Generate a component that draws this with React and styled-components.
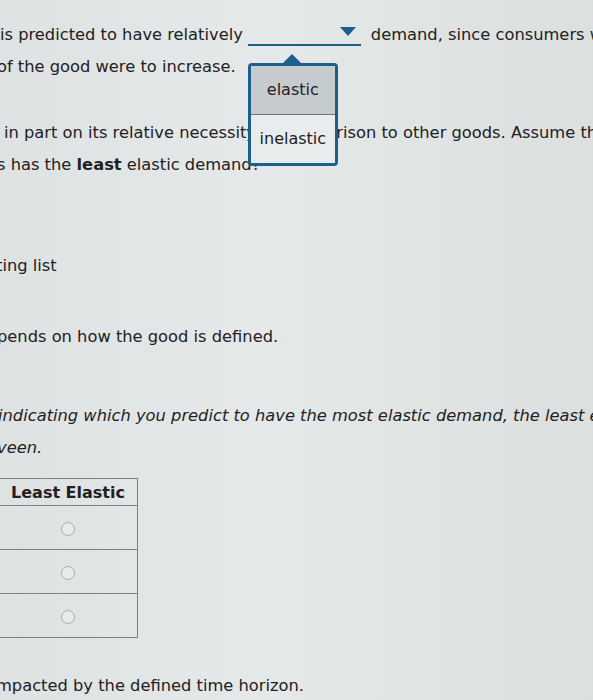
import React from "react";
import styled, { createGlobalStyle } from "styled-components";

const GlobalStyle = createGlobalStyle`
  html, body {
    margin: 0;
    padding: 0;
    background: #e3e6e6;
  }
  body {
    font-family: "DejaVu Sans", Verdana, sans-serif;
    color: #1f2122;
  }
`;

const Page = styled.div`
  width: 593px;
  height: 700px;
  overflow: hidden;
  padding-top: 19px;
  box-sizing: border-box;
  background: linear-gradient(90deg, #dfe2e2 0%, #e6e9e9 45%, #e2e6e5 60%, #dcdfdf 100%);
`;

const Para = styled.div`
  font-size: 16.3px;
  line-height: 32px;
  margin-top: ${(p) => p.$gap || 0}px;
  font-style: ${(p) => (p.$italic ? "italic" : "normal")};
`;

const Line = styled.div`
  white-space: nowrap;
  text-indent: ${(p) => p.$shift || 0}px;
`;

const Dropdown = styled.span`
  position: relative;
  display: inline-block;
  width: 113px;
  height: 22px;
  margin: 0 10px 0 5px;
  vertical-align: -6px;
  border-bottom: 2px solid #1d5f8b;
  text-indent: 0;
`;

const Caret = styled.span`
  position: absolute;
  right: 5px;
  top: 5px;
  width: 0;
  height: 0;
  border-left: 8px solid transparent;
  border-right: 8px solid transparent;
  border-top: 9px solid #1d5f8b;
`;

const Menu = styled.div`
  position: absolute;
  left: 0;
  top: 41px;
  width: 84px;
  border: 3px solid #1d5f8b;
  border-radius: 4px;
  background: #e9ecec;
  z-index: 2;

  &::before {
    content: "";
    position: absolute;
    left: 31px;
    top: -12px;
    border-left: 10px solid transparent;
    border-right: 10px solid transparent;
    border-bottom: 10px solid #1d5f8b;
  }
`;

const Option = styled.div`
  height: 48px;
  line-height: 48px;
  text-align: center;
  font-size: 16px;
  font-style: normal;
  color: #1f2122;
  background: ${(p) => (p.$active ? "#c6cccd" : "#e9ecec")};
  border-top: ${(p) => (p.$first ? "none" : "1px solid #6c7577")};
`;

const Table = styled.table`
  margin-top: 14px;
  margin-left: -2px;
  border-collapse: collapse;
  font-size: 16px;
`;

const HeadCell = styled.th`
  width: 138px;
  height: 26px;
  padding: 0;
  border: 1px solid #7c8283;
  font-weight: bold;
  text-align: center;
`;

const Cell = styled.td`
  height: 43px;
  padding: 0;
  border: 1px solid #7c8283;
  text-align: center;
`;

const Radio = styled.span`
  display: inline-block;
  width: 12px;
  height: 12px;
  border: 1.5px solid #a9aeae;
  border-radius: 50%;
  background: #e8ebea;
  vertical-align: middle;
`;

export default function App() {
  return (
    <>
      <GlobalStyle />
      <Page>
        <Para>
          <Line>
            is predicted to have relatively
            <Dropdown>
              <Caret />
              <Menu>
                <Option $first $active>elastic</Option>
                <Option>inelastic</Option>
              </Menu>
            </Dropdown>
            demand, since consumers would continue to buy it
          </Line>
          <Line $shift={-3}>of the good were to increase.</Line>
        </Para>
        <Para $gap={34}>
          <Line $shift={4}>in part on its relative necessity in comparison to other goods. Assume that</Line>
          <Line $shift={-3}>
            s has the <b>least</b> elastic demand?
          </Line>
        </Para>
        <Para $gap={69}>
          <Line $shift={-4}>ting list</Line>
        </Para>
        <Para $gap={39}>
          <Line $shift={-3}>pends on how the good is defined.</Line>
        </Para>
        <Para $gap={47} $italic>
          <Line $shift={-2}>indicating which you predict to have the most elastic demand, the least elastic</Line>
          <Line $shift={-3}>veen.</Line>
        </Para>
        <Table>
          <thead>
            <tr>
              <HeadCell>Least Elastic</HeadCell>
            </tr>
          </thead>
          <tbody>
            {[0, 1, 2].map((i) => (
              <tr key={i}>
                <Cell>
                  <Radio />
                </Cell>
              </tr>
            ))}
          </tbody>
        </Table>
        <Para $gap={32}>
          <Line $shift={-4}>mpacted by the defined time horizon.</Line>
        </Para>
      </Page>
    </>
  );
}
